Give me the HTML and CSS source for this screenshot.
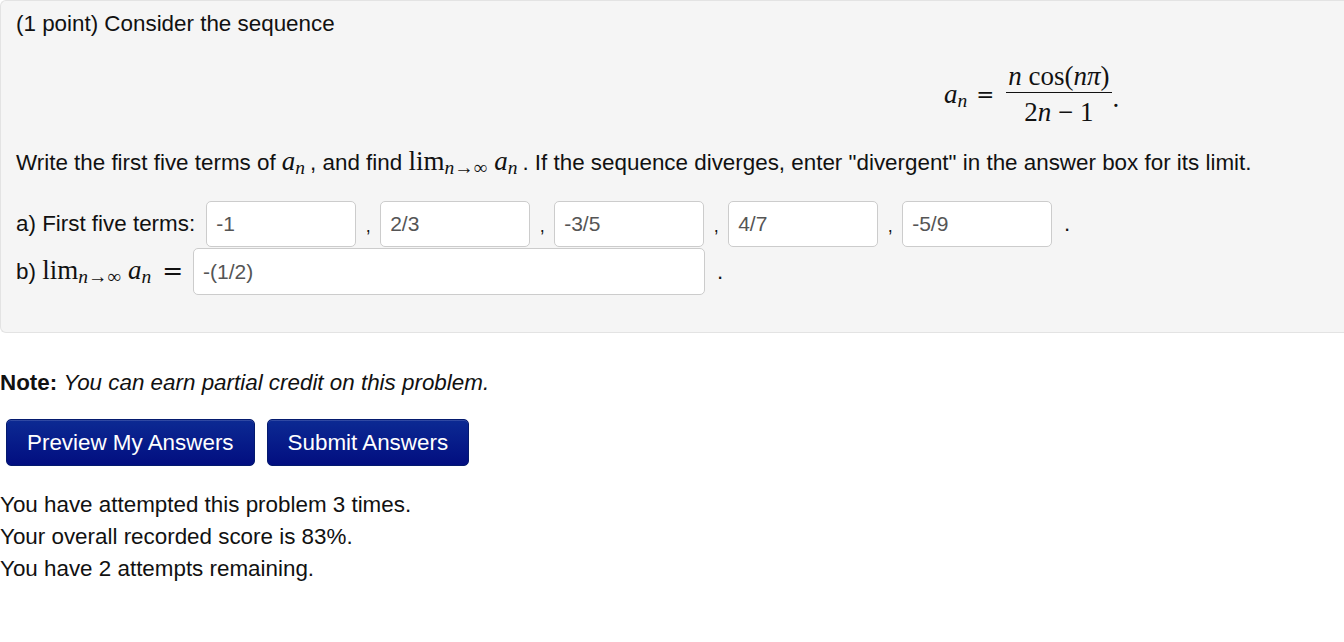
FILE: index.html
```html
<!DOCTYPE html>
<html>
<head>
<meta charset="utf-8">
<link rel="stylesheet" href="styles.css">
</head>
<body>
<div class="problem">
  <div class="line">(1 point) Consider the sequence</div>
  <div class="display">
    <span class="an"><span class="mi">a</span><sub class="sub mi">n</sub></span>
    <span class="rel">=</span>
    <span class="frac">
      <span class="num"><span class="mi">n</span> cos(<span class="mi">nπ</span>)</span>
      <span class="den">2<span class="mi">n</span> − 1</span>
    </span>
    <span class="dot">.</span>
  </div>
  <div class="line write">Write the first five terms of <span class="m"><span class="mi">a</span><sub class="sub mi">n</sub></span>, and find <span class="m">lim<sub class="sub"><span class="mi">n</span>→∞</sub> <span class="mi">a</span><sub class="sub mi">n</sub></span>. If the sequence diverges, enter "divergent" in the answer box for its limit.</div>
  <div class="row rowa">
    <span class="label">a) First five terms:</span>
    <span class="input w150">-1</span><span class="sep">,</span>
    <span class="input w150">2/3</span><span class="sep">,</span>
    <span class="input w150">-3/5</span><span class="sep">,</span>
    <span class="input w150">4/7</span><span class="sep">,</span>
    <span class="input w150">-5/9</span><span class="end">.</span>
  </div>
  <div class="row rowb">
    <span class="label">b) <span class="m mb">lim<sub class="sub"><span class="mi">n</span>→∞</sub> <span class="mi">a</span><sub class="sub mi">n</sub></span><span class="rel2">=</span></span>
    <span class="input w512">-(1/2)</span><span class="end">.</span>
  </div>
</div>
<div class="note"><b>Note:</b> <i>You can earn partial credit on this problem.</i></div>
<div class="buttons">
  <button class="btn">Preview My Answers</button>
  <button class="btn">Submit Answers</button>
</div>
<div class="status">
  <div>You have attempted this problem 3 times.</div>
  <div>Your overall recorded score is 83%.</div>
  <div>You have 2 attempts remaining.</div>
</div>
</body>
</html>
```
FILE: styles.css
```css
html, body {
  margin: 0;
  padding: 0;
  background: #ffffff;
  overflow: hidden;
}
body {
  font-family: "Liberation Sans", Arial, sans-serif;
  font-size: 22.4px;
  line-height: 32px;
  color: #111;
}
.problem {
  background: #f5f5f5;
  border: 1px solid #e3e3e3;
  border-right: none;
  border-radius: 6px 0 0 6px;
  padding: 7px 0 0 15px;
  box-sizing: border-box;
  height: 333px;
}
.line {
  white-space: nowrap;
}
.display {
  display: flex;
  align-items: flex-start;
  padding-left: 928px;
  margin-top: 23px;
  height: 84px;
  font-family: "Liberation Serif", "DejaVu Serif", serif;
  font-size: 27px;
  line-height: 26px;
}
.mi {
  font-style: italic;
}
.sub {
  font-size: 72%;
  line-height: 0;
  vertical-align: -0.22em;
}
.an {
  margin-top: 18px;
}
.rel {
  font-family: "DejaVu Serif", serif;
  font-size: 21.5px;
  margin: 19px 12px 0 9px;
}
.frac {
  display: flex;
  flex-direction: column;
  align-items: center;
}
.num {
  padding: 0 2px 3px;
  border-bottom: 1.5px solid #111;
}
.den {
  padding-top: 6px;
}
.dot {
  margin: 22px 0 0 1px;
}
.m {
  font-family: "Liberation Serif", "DejaVu Serif", serif;
  font-size: 27px;
  line-height: 1;
  margin-right: 5px;
}
.mb {
  margin-right: 0;
}
.rel2 {
  font-family: "DejaVu Serif", serif;
  font-size: 25px;
  margin-left: 11px;
}
.row {
  display: flex;
  align-items: center;
  white-space: nowrap;
}
.rowa {
  margin-top: 22px;
}
.rowb {
  margin-top: 1px;
}
.label {
  margin-right: 11px;
}
.rowb .label {
  margin-right: 10px;
}
.input {
  display: inline-block;
  box-sizing: border-box;
  height: 46px;
  line-height: 44px;
  background: #fff;
  border: 1px solid #cccccc;
  border-radius: 5px;
  padding-left: 9px;
  color: #555;
  font-size: 21px;
}
.rowb .input {
  height: 47px;
  line-height: 45px;
}
.w150 { width: 150px; }
.w512 { width: 512px; }
.sep {
  width: 24px;
  text-align: center;
  font-size: 18px;
  padding-top: 4px;
}
.end {
  width: 30px;
  text-align: center;
}
.note {
  margin-top: 34px;
}
.buttons {
  display: flex;
  gap: 12px;
  margin: 20px 0 0 6px;
}
.btn {
  font-family: "Liberation Sans", Arial, sans-serif;
  font-size: 22.4px;
  color: #fff;
  height: 47px;
  padding: 0 20px;
  border: 1px solid #041a6e;
  border-radius: 5px;
  background: linear-gradient(#0c2a93, #020e80);
  box-shadow: inset 0 1px 0 rgba(255,255,255,0.15);
}
.status {
  margin-top: 23px;
}
```
